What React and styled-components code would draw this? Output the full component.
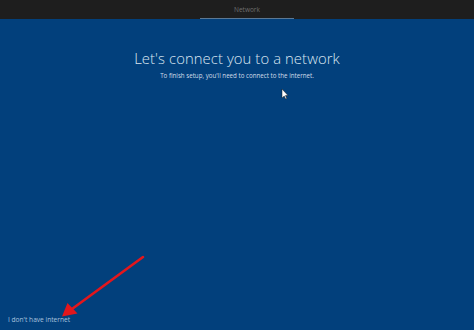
import React from "react";
import styled, { createGlobalStyle } from "styled-components";

const Global = createGlobalStyle`
  html, body { margin: 0; padding: 0; background: #02407c; }
  body { width: 474px; height: 330px; overflow: hidden; font-family: "Open Sans", "Noto Sans", sans-serif; }
  #root { width: 474px; height: 330px; }
`;

const Screen = styled.div`
  position: relative;
  width: 474px;
  height: 330px;
  display: flex;
  flex-direction: column;
  background: #02407c;
  overflow: hidden;
`;

const TopBar = styled.div`
  height: 19px;
  background: #1e1e1e;
  display: flex;
  justify-content: center;
  flex-shrink: 0;
`;

const Tab = styled.div`
  width: 94px;
  margin-left: 20px;
  display: flex;
  align-items: center;
  justify-content: center;
  font-size: 6.5px;
  color: #6e6e6e;
  border-bottom: 1px solid #5b7894;
`;

const Content = styled.div`
  flex: 1;
  display: flex;
  flex-direction: column;
  align-items: center;
  padding-top: 29px;
`;

const Title = styled.h1`
  margin: 0;
  font-weight: 300;
  font-size: 14.8px;
  letter-spacing: 0.1px;
  color: #dbe6f1;
  line-height: 20px;
`;

const Subtitle = styled.p`
  margin: 4px 0 0;
  font-size: 6.2px;
  color: #d3deea;
  line-height: 8px;
`;

const Footer = styled.div`
  padding: 0 0 3px 8px;
`;

const Link = styled.span`
  font-size: 6.6px;
  color: #a9c3df;
`;

const Overlay = styled.svg`
  position: absolute;
  left: 0;
  top: 0;
  pointer-events: none;
`;

export default function App() {
  return (
    <>
      <Global />
      <Screen>
        <TopBar>
          <Tab>Network</Tab>
        </TopBar>
        <Content>
          <Title>Let's connect you to a network</Title>
          <Subtitle>To finish setup, you'll need to connect to the internet.</Subtitle>
        </Content>
        <Footer>
          <Link>I don't have internet</Link>
        </Footer>
        <Overlay width="474" height="330" viewBox="0 0 474 330">
          <path d="M282 89 L282 98 L284.2 96 L285.6 99 L286.8 98.4 L285.4 95.6 L288 95.5 Z" fill="#ffffff" stroke="#1a1a1a" strokeWidth="0.5" />
          <line x1="143" y1="257" x2="72" y2="309" stroke="#e3161c" strokeWidth="2.6" strokeLinecap="round" />
          <path d="M62 316.5 L67.5 303 L77.5 313.5 Z" fill="#e3161c" />
        </Overlay>
      </Screen>
    </>
  );
}
